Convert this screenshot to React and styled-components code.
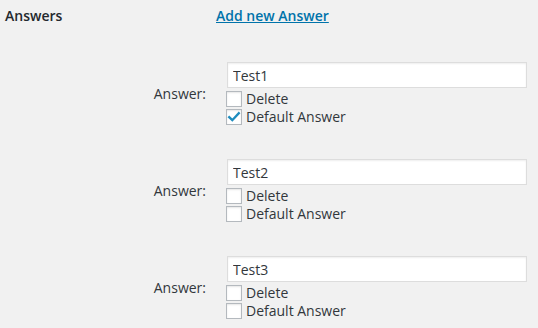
import React from "react";
import styled, { createGlobalStyle } from "styled-components";

const Global = createGlobalStyle`
  html, body { margin: 0; padding: 0; background: #f1f1f1; }
  body { font-family: "Open Sans", "Liberation Sans", sans-serif; font-size: 14px; color: #444; }
`;

const Page = styled.div`
  width: 538px;
  height: 328px;
  overflow: hidden;
`;

const Header = styled.div`
  display: grid;
  grid-template-columns: 216px auto;
  padding-top: 6px;
  line-height: 20px;
`;

const SectionTitle = styled.div`
  padding-left: 5px;
  font-weight: 600;
  color: #23282d;
`;

const AddLink = styled.a`
  color: #0073aa;
  font-weight: 600;
  text-decoration: underline;
  cursor: pointer;
`;

const List = styled.div`
  margin-top: 36px;
  display: flex;
  flex-direction: column;
  gap: 33px;
`;

const AnswerBlock = styled.div`
  display: grid;
  grid-template-columns: 206px 302px;
  column-gap: 20px;
  align-items: center;
`;

const AnswerLabel = styled.div`
  text-align: right;
  line-height: 20px;
  color: #32373c;
`;

const Fields = styled.div`
  display: flex;
  flex-direction: column;
`;

const TextInput = styled.input`
  box-sizing: border-box;
  width: 300px;
  height: 26px;
  margin: 0 1px 2px;
  padding: 3px 5px;
  border: 1px solid #ddd;
  background: #fff;
  box-shadow: inset 0 1px 2px rgba(0, 0, 0, 0.07);
  font-family: inherit;
  font-size: 14px;
  color: #32373c;
  outline: none;
`;

const CheckRow = styled.label`
  display: flex;
  align-items: flex-start;
  height: 18px;
  line-height: 18px;
  color: #32373c;
`;

const Box = styled.span`
  box-sizing: border-box;
  width: 16px;
  height: 16px;
  margin-top: 1px;
  margin-right: 4px;
  border: 1px solid #b4b9be;
  background: #fff;
  box-shadow: inset 0 1px 2px rgba(0, 0, 0, 0.1);
  display: flex;
  align-items: center;
  justify-content: center;
  flex: none;
`;

const Check = () => (
  <svg width="14" height="14" viewBox="0 0 14 14">
    <path d="M2.2 7.2 L5.3 10.2 L11.8 3.2" fill="none" stroke="#1e8cbe" strokeWidth="2.3" strokeLinecap="square" />
  </svg>
);

const Checkbox = ({ checked, children }) => (
  <CheckRow>
    <Box>{checked && <Check />}</Box>
    {children}
  </CheckRow>
);

const answers = [
  { value: "Test1", isDefault: true },
  { value: "Test2", isDefault: false },
  { value: "Test3", isDefault: false },
];

export default function App() {
  return (
    <Page>
      <Global />
      <Header>
        <SectionTitle>Answers</SectionTitle>
        <div>
          <AddLink>Add new Answer</AddLink>
        </div>
      </Header>
      <List>
        {answers.map((a) => (
          <AnswerBlock key={a.value}>
            <AnswerLabel>Answer:</AnswerLabel>
            <Fields>
              <TextInput defaultValue={a.value} />
              <Checkbox checked={false}>Delete</Checkbox>
              <Checkbox checked={a.isDefault}>Default Answer</Checkbox>
            </Fields>
          </AnswerBlock>
        ))}
      </List>
    </Page>
  );
}
